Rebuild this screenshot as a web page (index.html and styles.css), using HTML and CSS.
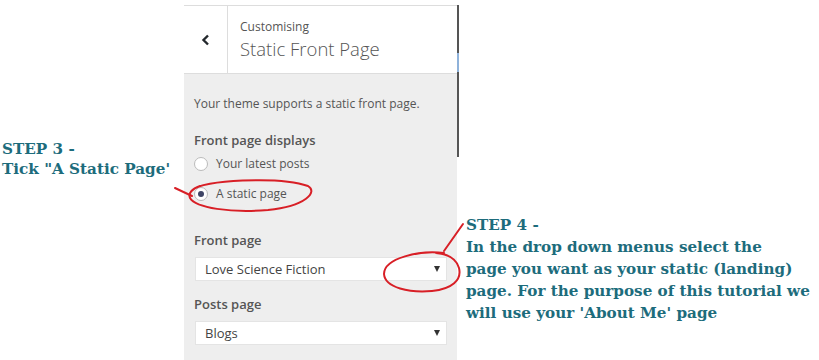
FILE: index.html
```html
<!DOCTYPE html>
<html>

<head>
  <title>Static Front Page</title>
  <link rel="stylesheet" href="styles.css">
</head>

<body>
  <div class="page">
    <div class="step step-3">
      STEP 3 -<br>
      Tick "A Static Page'
    </div>

    <div class="panel">
      <div class="panel-head">
        <div class="back">
          <svg width="10" height="12" viewBox="0 0 10 12">
            <path d="M7 1.5 L2.5 6 L7 10.5" fill="none" stroke="#23282d" stroke-width="2.4" />
          </svg>
        </div>
        <div class="title">
          <div class="title-small">Customising</div>
          <div class="title-big">Static Front Page</div>
        </div>
      </div>

      <div class="panel-body">
        <p class="desc">Your theme supports a static front page.</p>

        <div class="label label-displays">Front page displays</div>
        <label class="radio">
          <span class="dot"></span>
          Your latest posts
        </label>
        <label class="radio checked">
          <span class="dot"></span>
          A static page
        </label>

        <div class="label label-front">Front page</div>
        <div class="select">
          <span>Love Science Fiction</span>
          <span class="arrow"></span>
        </div>

        <div class="label label-posts">Posts page</div>
        <div class="select">
          <span>Blogs</span>
          <span class="arrow"></span>
        </div>
      </div>
    </div>

    <div class="edge">
      <div class="edge-blue"></div>
    </div>

    <div class="step step-4">
      STEP 4 -<br>
      In the drop down menus select the<br>
      page you want as your static (landing)<br>
      page. For the purpose of this tutorial we<br>
      will use your 'About Me' page
    </div>

    <!-- hand drawn red marks -->
    <svg class="marks" width="819" height="360" viewBox="0 0 819 360">
      <path d="M175 188 L192 196" />
      <path d="M193 190 C 200 180, 280 176, 308 186 C 318 192, 306 206, 268 210 C 230 213, 196 208, 190 198 C 188 193, 192 189, 200 186" />
      <path d="M463 224 L444 251" />
      <path d="M444 253 C 420 250, 384 258, 384 274 C 385 288, 410 293, 432 291 C 452 289, 462 280, 459 268 C 456 258, 448 254, 436 253" />
    </svg>
  </div>
</body>

</html>
```

FILE: styles.css
```css
body {
  margin: 0;
  background: #fff;
  font-family: "Open Sans", sans-serif;
}

.page {
  position: relative;
  display: flex;
  align-items: flex-start;
  width: 819px;
  height: 360px;
  overflow: hidden;
}

.step {
  font-family: "DejaVu Serif", serif;
  font-weight: bold;
  font-size: 15.2px;
  color: #1d6c7c;
}

.step-3 {
  width: 182px;
  padding: 139px 0 0 2px;
  line-height: 20px;
}

.step-4 {
  margin-left: 7px;
  padding-top: 214px;
  line-height: 22px;
  white-space: nowrap;
}

/* customizer panel */

.panel {
  width: 273px;
  height: 355px;
  margin-top: 5px;
  background: #eee;
  color: #555;
}

.panel-head {
  display: flex;
  height: 67px;
  background: #fff;
  border-top: 1px solid #ddd;
  border-bottom: 1px solid #ddd;
}

.back {
  width: 43px;
  border-right: 1px solid #ddd;
  display: flex;
  align-items: center;
  justify-content: center;
}

.title {
  padding: 13px 0 0 12px;
}

.title-small {
  font-size: 12px;
  line-height: 16px;
}

.title-big {
  font-size: 18.5px;
  line-height: 28px;
  font-weight: 300;
}

.panel-body {
  padding: 0 10px 0 10px;
  font-size: 12px;
}

.desc {
  margin: 21px 0 0;
  line-height: 18px;
}

.label {
  line-height: 18px;
  font-size: 13px;
  font-weight: 600;
}

.label-displays {
  margin-top: 18px;
}

.label-front {
  margin-top: 28px;
}

.label-posts {
  margin-top: 14px;
}

.radio {
  display: flex;
  align-items: center;
  gap: 8px;
  line-height: 18px;
  margin-top: 6px;
}

.radio.checked {
  margin-top: 12px;
}

.dot {
  width: 12px;
  height: 12px;
  border: 1px solid #bbb;
  border-radius: 50%;
  background: #fff;
  display: flex;
  align-items: center;
  justify-content: center;
}

.radio.checked .dot::after {
  content: "";
  width: 6px;
  height: 6px;
  border-radius: 50%;
  background: #3f4566;
}

.select {
  box-sizing: border-box;
  display: flex;
  align-items: center;
  justify-content: space-between;
  height: 24px;
  margin: 8px 0 0 1px;
  padding: 0 6px 0 9px;
  background: #fff;
  border: 1px solid #e4e4e4;
  color: #444;
  font-size: 13px;
}

.select .arrow {
  width: 0;
  height: 0;
  border-left: 3px solid transparent;
  border-right: 3px solid transparent;
  border-top: 6px solid #333;
}

.edge {
  width: 2px;
  height: 104px;
  margin-top: 5px;
  background: #555;
  padding-top: 48px;
}

.edge-blue {
  height: 19px;
  background: #8fb2da;
}

.marks {
  position: absolute;
  left: 0;
  top: 0;
  pointer-events: none;
}

.marks path {
  fill: none;
  stroke: #d81f26;
  stroke-width: 2;
  stroke-linecap: round;
}
```
